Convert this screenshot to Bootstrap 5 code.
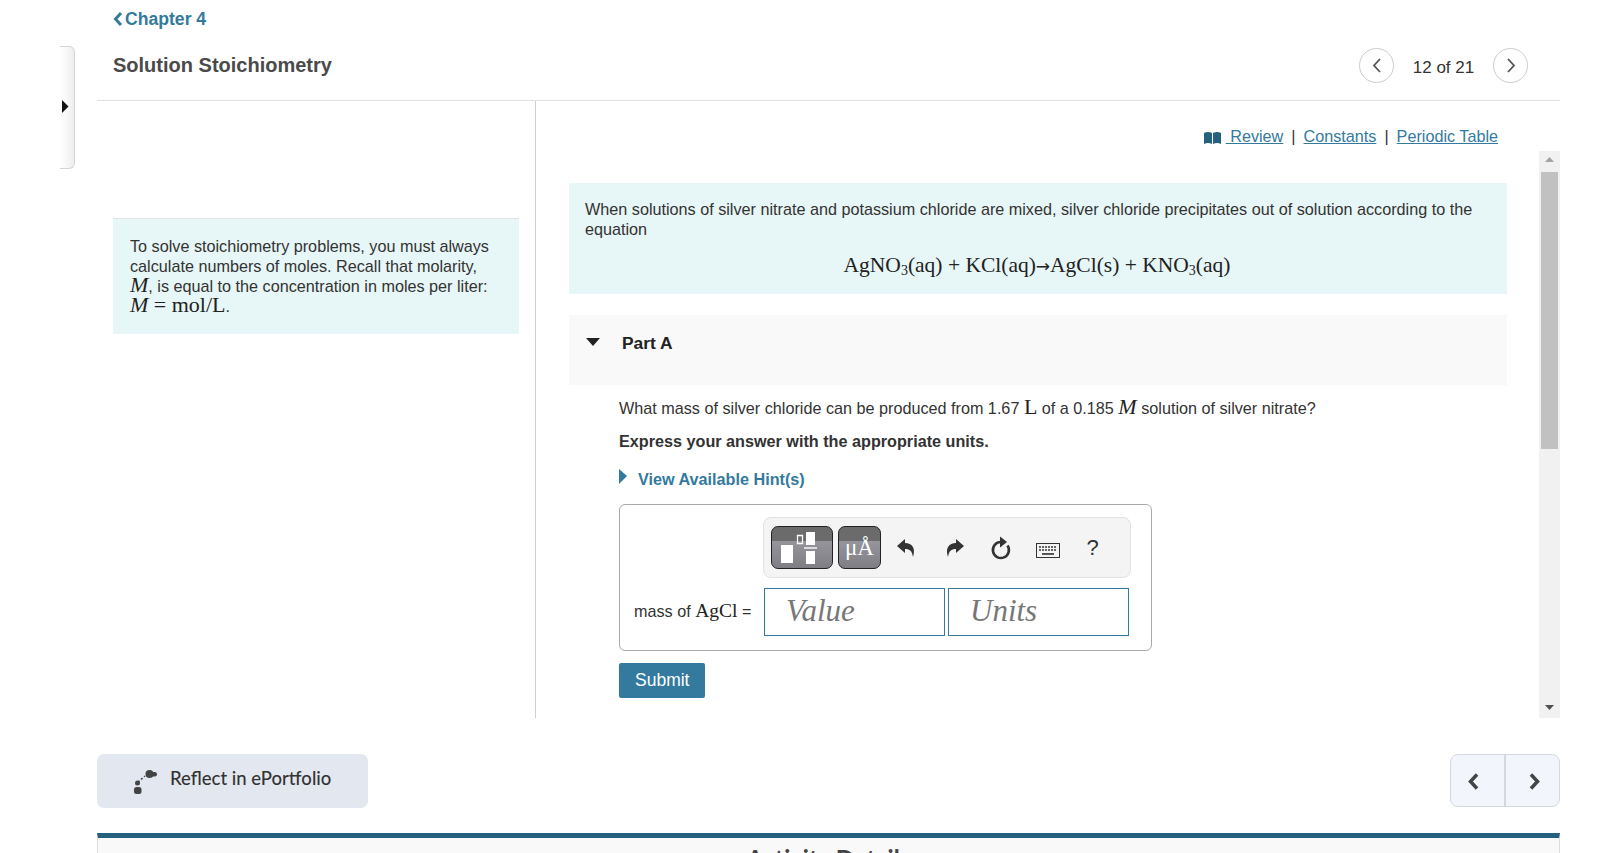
<!DOCTYPE html>
<html lang="en">
<head>
  <meta charset="UTF-8">
  <title>Solution Stoichiometry</title>
  <meta name="viewport" content="width=device-width, initial-scale=1">
  <link href="https://cdn.jsdelivr.net/npm/bootstrap@5.3.3/dist/css/bootstrap.min.css" rel="stylesheet">
  <style>
    html, body {
      height: 853px;
      overflow: hidden;
    }

    body {
      font-family: "Liberation Sans", Arial, sans-serif;
      font-size: 16.2px;
      line-height: 20px;
      color: #333;
      background: #fff;
    }

    a {
      color: #337a9e;
    }

    .mth {
      font-family: "Liberation Serif", serif;
      color: #222;
      line-height: 1;
    }

    .mth-big {
      font-size: 22px;
      line-height: 0;
    }

    .panel-tab {
      position: absolute;
      left: 60px;
      top: 46px;
      width: 15px;
      height: 123px;
      border: 1px solid #d0d5de;
      border-left: 0;
      border-radius: 0 6px 6px 0;
      background: linear-gradient(90deg, #fff, #eee);
    }

    .panel-tab svg {
      position: absolute;
      left: 2px;
      top: 53px;
    }

    .page-wrap {
      margin-left: 97px;
      width: 1463px;
    }

    .crumb {
      height: 38px;
      padding: 9px 0 0 16px;
      font-weight: 700;
      font-size: 17.6px;
    }

    .crumb a {
      text-decoration: none;
      gap: 2px;
    }

    .title-row {
      height: 63px;
      padding: 0 32px 8px 16px;
      border-bottom: 1px solid #dcdfe6;
    }

    .title-row h1 {
      font-size: 20px;
      font-weight: 700;
      color: #4a4a4a;
      margin: 0;
    }

    .circle-btn {
      width: 35px;
      height: 35px;
      border: 1px solid #ccc;
      border-radius: 50%;
      background: #fff;
      padding: 0 0 2px;
    }

    .pager-text {
      width: 99px;
      padding-top: 5px;
      text-align: center;
      font-size: 17px;
      color: #333;
    }

    .split {
      height: 617px;
    }

    .side-col {
      width: 439px;
      border-right: 1px solid #c5d0dc;
      padding: 117px 0 0 16px;
      flex: none;
    }

    .intro-box {
      width: 406px;
      height: 116px;
      background: #e7f6f6;
      border-top: 1px solid #dfe5e5;
      padding: 17px 16px 0 17px;
    }

    .main-col {
      position: relative;
      flex: 1;
      padding: 25px 0 0 33px;
    }

    .res-links {
      width: 938px;
      height: 57px;
      padding-right: 9px;
      text-align: right;
    }

    .res-links .sep {
      margin: 0 8px;
    }

    .question-box {
      width: 938px;
      height: 111px;
      background: #e7f6f6;
      padding: 16px 16px 0;
    }

    .question-eq {
      font-size: 21.5px;
      text-align: center;
      margin-top: 16px;
      padding-right: 2px;
      line-height: 20px;
    }

    .question-eq sub {
      font-size: 14px;
      bottom: -3px;
      position: relative;
      line-height: 0;
    }

    .question-eq .arrow {
      font-family: "DejaVu Sans", sans-serif;
      font-size: 17px;
    }

    .part-head {
      width: 938px;
      height: 70px;
      margin-top: 21px;
      background: #f9f9f9;
      padding: 18px 17px;
      font-weight: 700;
      font-size: 17.4px;
      color: #222;
      gap: 21px;
    }

    .part-body {
      padding: 13px 0 0 50px;
    }

    .part-body p {
      margin: 0;
    }

    .part-body .ask {
      margin-top: 13px;
      font-weight: 700;
    }

    .hint-row {
      margin-top: 18px;
      font-weight: 700;
      gap: 11px;
    }

    .hint-row svg {
      margin-top: -5px;
    }

    .hint-row a {
      text-decoration: none;
    }

    .answer-box {
      width: 533px;
      height: 147px;
      margin-top: 15px;
      border: 1px solid #aaa;
      border-radius: 6px;
      padding: 12px 14px 0;
    }

    .tool-strip {
      width: 368px;
      height: 61px;
      margin-left: 129px;
      padding: 7px 7px;
      background: #f4f4f4;
      border: 1px solid #e2e2e2;
      border-radius: 8px;
    }

    .tpl-btn {
      height: 43px;
      border: 1px solid #222;
      border-radius: 7px;
      background: linear-gradient(180deg, #6b6b6b 0, #6b6b6b 14px, #96959c 14px, #7f7e84 100%);
      padding: 0;
      flex: none;
      position: relative;
    }

    .tpl-units {
      width: 43px;
      margin-left: 5px;
      margin-right: 2px;
      font-size: 23px;
    }

    .tool-icon {
      width: 47px;
      flex: none;
      text-align: center;
    }

    .tool-help {
      font-size: 22px;
      color: #333;
      margin-left: -2px;
    }

    .ans-row {
      margin-top: 10px;
    }

    .ans-label {
      width: 130px;
      padding-bottom: 2px;
    }

    .ans-chem {
      font-size: 19.5px;
    }

    .ans-field {
      width: 181px;
      height: 48px;
      border: 1px solid #337a9e;
      font-family: "Liberation Serif", serif;
      font-style: italic;
      font-size: 31px;
      color: #777;
      padding: 0 21px;
      line-height: 44px;
    }

    .ans-field + .ans-field {
      margin-left: 3px;
    }

    .submit-btn {
      background: #337a9e;
      border-radius: 2px;
      color: #fff;
      padding: 7px 16px 8px;
      font-size: 17.5px;
      line-height: 20px;
      margin-top: 12px;
      border: 0;
    }

    .fake-scroll {
      position: absolute;
      right: 0;
      top: 50px;
      bottom: 0;
      width: 21px;
      background: #f1f1f1;
    }

    .fake-scroll .thumb {
      position: absolute;
      left: 2px;
      right: 2px;
      top: 21px;
      height: 277px;
      background: #c1c1c1;
    }

    .fake-scroll svg {
      position: absolute;
      left: 6px;
    }

    .foot-row {
      margin-top: 36px;
    }

    .reflect-btn {
      width: 271px;
      height: 54px;
      background: #e3e7f0;
      border: 0;
      border-radius: 7px;
      font-family: Lato, sans-serif;
      font-weight: 500;
      font-size: 18.5px;
      color: #333;
      padding: 0 0 0 37px;
      gap: 12px;
    }

    .reflect-btn svg {
      margin-top: 2px;
    }

    .reflect-btn span {
      margin-bottom: 6px;
    }

    .step-group {
      width: 110px;
      height: 53px;
      border: 1px solid #d3d7e0;
      border-radius: 8px;
      background: #f2f5fb;
      overflow: hidden;
    }

    .step-group button {
      border: 0;
      background: transparent;
      padding: 0;
    }

    .step-group button:first-child {
      flex: 0 0 55px;
      border-right: 2px solid #d3d7e0;
      padding-right: 9px;
    }

    .step-group button:last-child {
      flex: 1 1 0;
      padding-left: 3px;
    }

    .details-strip {
      margin-top: 25px;
      height: 30px;
      border-top: 5px solid #25607f;
      border-left: 1px solid #ddd;
      border-right: 1px solid #ddd;
      background: #f9f9f9;
      text-align: center;
      font-family: Lato, sans-serif;
      font-weight: 700;
      font-size: 24px;
      line-height: 20px;
      color: #444;
      padding-top: 11px;
      overflow: hidden;
    }
  </style>
</head>
<body>
  <div class="panel-tab">
    <svg width="7" height="13" viewBox="0 0 7 13"><path d="M0 0l6.500 6.500L0 13z" fill="#111"/></svg>
  </div>

  <div class="page-wrap">
    <div class="crumb">
      <a href="#" class="d-inline-flex align-items-center">
        <svg width="10" height="16" viewBox="0 0 10 16"><path d="M8 2 2.500 8 8 14" fill="none" stroke="#337a9e" stroke-width="3"/></svg>
        Chapter 4
      </a>
    </div>

    <div class="title-row d-flex align-items-center justify-content-between">
      <h1>Solution Stoichiometry</h1>
      <div class="d-flex align-items-center">
        <button class="circle-btn" type="button" aria-label="Previous">
          <svg width="12" height="17" viewBox="0 0 12 17"><path d="M9 2 3 8.500 9 15" fill="none" stroke="#555" stroke-width="1.800"/></svg>
        </button>
        <span class="pager-text">12 of 21</span>
        <button class="circle-btn" type="button" aria-label="Next">
          <svg width="12" height="17" viewBox="0 0 12 17"><path d="M3 2l6 6.500L3 15" fill="none" stroke="#555" stroke-width="1.800"/></svg>
        </button>
      </div>
    </div>

    <div class="split d-flex">
      <div class="side-col">
        <div class="intro-box">
          To solve stoichiometry problems, you must always calculate numbers of moles. Recall that molarity,<br>
          <i class="mth mth-big">M</i>, is equal to the concentration in moles per liter:<br>
          <span class="mth mth-big"><i>M</i> = mol/L</span>.
        </div>
      </div>

      <div class="main-col">
        <div class="res-links">
          <svg width="17" height="12" viewBox="0 0 17 12"><path d="M0 1q4-2 8 0v11q-4-2-8 0zM9 1q4-2 8 0v11q-4-2-8 0z" fill="#25607f"/></svg>
          <a href="#">&nbsp;Review</a><span class="sep">|</span><a href="#">Constants</a><span class="sep">|</span><a href="#">Periodic Table</a>
        </div>

        <div class="question-box">
          When solutions of silver nitrate and potassium chloride are mixed, silver chloride precipitates out of solution according to the equation
          <div class="question-eq mth">AgNO<sub>3</sub>(aq) + KCl(aq)<span class="arrow">→</span>AgCl(s) + KNO<sub>3</sub>(aq)</div>
        </div>

        <div class="part-head d-flex align-items-start">
          <svg class="mt-1" width="15" height="10" viewBox="0 0 15 10"><path d="M0 1h14L7 9z" fill="#222"/></svg>
          <span>Part A</span>
        </div>

        <div class="part-body">
          <p>What mass of silver chloride can be produced from 1.67 <span class="mth mth-big">L</span> of a 0.185 <i class="mth mth-big">M</i> solution of silver nitrate?</p>
          <p class="ask">Express your answer with the appropriate units.</p>
          <div class="hint-row d-flex align-items-center">
            <svg width="8" height="15" viewBox="0 0 8 15"><path d="M0 0l8 7L0 15z" fill="#337a9e"/></svg>
            <a href="#">View Available Hint(s)</a>
          </div>

          <div class="answer-box">
            <div class="tool-strip d-flex align-items-center">
              <button class="tpl-btn" type="button" style="width:62px" aria-label="Templates">
                <svg width="60" height="41" viewBox="0 0 60 41" class="d-block"><path d="M9 18h12v18H9zM34 5h9v13h-9zM34 24h9v13h-9z" fill="#fff"/><path d="M32 21h13" stroke="#ddd" stroke-width="2"/><path d="M25.500 8.500h5v8h-5z" fill="none" stroke="#fff" stroke-width="1.300"/></svg>
              </button>
              <button class="tpl-btn tpl-units mth text-white" type="button" aria-label="Units">μÅ</button>
              <span class="tool-icon">
                <svg width="22" height="24" viewBox="0 0 22 24"><path d="M9 3 1 10l8 7v-4c5 0 7 2 8 8 3-9-1-14-8-14z" fill="#333"/></svg>
              </span>
              <span class="tool-icon">
                <svg width="22" height="24" viewBox="0 0 22 24"><path d="M13 3l8 7-8 7v-4c-5 0-7 2-8 8-3-9 1-14 8-14z" fill="#333"/></svg>
              </span>
              <span class="tool-icon">
                <svg width="22" height="26" viewBox="0 0 22 26"><path d="M11 7a8 8 0 1 0 6.500 3.500" fill="none" stroke="#333" stroke-width="2.600"/><path d="M10 1.500v11l7-5.500z" fill="#333"/></svg>
              </span>
              <span class="tool-icon">
                <svg class="mt-1" width="24" height="15" viewBox="0 0 24 15"><rect x=".5" y=".5" width="23" height="14" fill="#f4f4f4" stroke="#333"/><path d="M3 4h18M3 7h18" stroke="#666" stroke-width="2" stroke-dasharray="2 1"/><path d="M6 11h12" stroke="#555" stroke-width="2"/></svg>
              </span>
              <span class="tool-icon tool-help">?</span>
            </div>

            <div class="ans-row d-flex align-items-center">
              <span class="ans-label">mass of <span class="mth ans-chem">AgCl</span> =</span>
              <span class="ans-field">Value</span>
              <span class="ans-field">Units</span>
            </div>
          </div>

          <button class="btn submit-btn" type="button">Submit</button>
        </div>

        <div class="fake-scroll">
          <svg width="9" height="6" viewBox="0 0 9 6" style="top:6px"><path d="M0 5h9L4.500 0z" fill="#a3a3a3"/></svg>
          <div class="thumb"></div>
          <svg width="9" height="6" viewBox="0 0 9 6" style="bottom:7px"><path d="M0 0h9L4.500 5z" fill="#505050"/></svg>
        </div>
      </div>
    </div>

    <div class="foot-row d-flex justify-content-between align-items-start">
      <button class="reflect-btn d-flex align-items-center" type="button">
        <svg width="24" height="24" viewBox="0 0 24 24"><circle cx="15.500" cy="4" r="4" fill="#444"/><rect x="12" y="2" width="11" height="4.500" rx="2.200" fill="#444"/><path d="M4 12l7-6" stroke="#444" stroke-width="1.500" stroke-dasharray="2 2"/><circle cx="3.500" cy="13" r="2.500" fill="#444"/><rect x="0" y="17" width="7.500" height="7" rx="2.500" fill="#444"/></svg>
        <span>Reflect in ePortfolio</span>
      </button>
      <div class="step-group d-flex">
        <button type="button" aria-label="Previous">
          <svg width="13" height="19" viewBox="0 0 13 19"><path d="M10 2.500 3.500 9.500l6.500 7" fill="none" stroke="#444" stroke-width="3.500"/></svg>
        </button>
        <button type="button" aria-label="Next">
          <svg width="13" height="19" viewBox="0 0 13 19"><path d="M3 2.500l6.500 7-6.500 7" fill="none" stroke="#444" stroke-width="3.500"/></svg>
        </button>
      </div>
    </div>

    <div class="details-strip">Activity Details</div>
  </div>

  <script src="https://cdn.jsdelivr.net/npm/bootstrap@5.3.3/dist/js/bootstrap.bundle.min.js"></script>
</body>
</html>
